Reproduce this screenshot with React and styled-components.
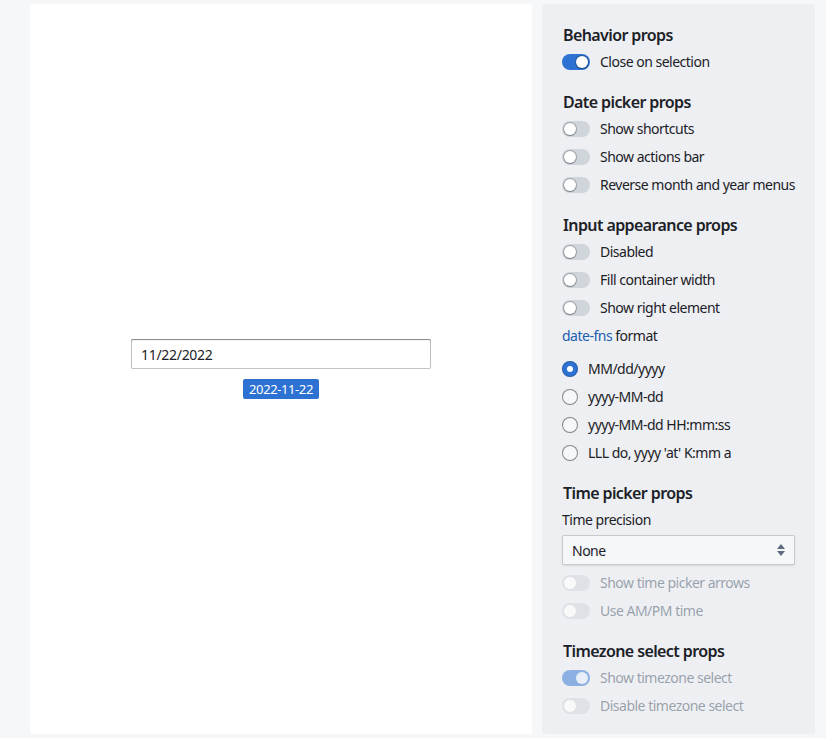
import React from "react";
import styled, { createGlobalStyle, css } from "styled-components";

const GlobalStyle = createGlobalStyle`
  html, body {
    margin: 0;
    padding: 0;
    background: #f6f7f9;
  }
  body {
    font-family: "Noto Sans", "Open Sans", sans-serif;
    font-size: 14px;
    letter-spacing: -0.5px;
    color: #1c2127;
  }
  * {
    box-sizing: border-box;
  }
`;

const Page = styled.div`
  display: flex;
  gap: 10px;
  height: 738px;
  padding: 4px 11px 4px 30px;
`;

const Example = styled.div`
  flex: 1;
  background: #fff;
  border-radius: 3px;
  display: flex;
  flex-direction: column;
  align-items: center;
  justify-content: center;
  gap: 10px;
`;

const DateInput = styled.input`
  width: 300px;
  height: 30px;
  padding: 0 10px;
  border: none;
  border-radius: 2px;
  font: inherit;
  letter-spacing: -0.3px;
  color: #1c2127;
  background: #fff;
  box-shadow: inset 0 0 0 1px rgba(17, 20, 24, 0.25),
    inset 0 1px 1px rgba(17, 20, 24, 0.35);
  outline: none;
`;

const Tag = styled.span`
  display: inline-flex;
  align-items: center;
  height: 20px;
  padding: 0 6px;
  border-radius: 2px;
  background: #2d72d2;
  color: #fff;
  font-size: 13px;
  letter-spacing: -0.4px;
`;

const Options = styled.div`
  width: 273px;
  background: #edeff2;
  border-radius: 3px;
  padding: 20px 20px 9px;
  display: flex;
  flex-direction: column;
`;

const Heading = styled.h5`
  margin: 0 0 7px 1px;
  font-size: 16px;
  font-weight: 600;
  line-height: 22px;
  letter-spacing: -0.6px;
`;

const Section = styled.div`
  display: flex;
  flex-direction: column;
  & + & {
    margin-top: 10px;
  }
`;

const Row = styled.label`
  display: flex;
  align-items: center;
  gap: 10px;
  height: 18px;
  margin-bottom: 10px;
  line-height: 18px;
  white-space: nowrap;
  color: ${(p) => (p.$disabled ? "rgba(95, 107, 124, 0.6)" : "#1c2127")};
`;

const Track = styled.span`
  position: relative;
  flex: none;
  width: 28px;
  height: 16px;
  border-radius: 8px;
  background: ${(p) =>
    p.$on
      ? p.$disabled
        ? "rgba(45, 114, 210, 0.5)"
        : "#2d72d2"
      : p.$disabled
      ? "rgba(143, 153, 168, 0.15)"
      : "rgba(143, 153, 168, 0.3)"};
`;

const Knob = styled.span`
  position: absolute;
  top: 2px;
  left: ${(p) => (p.$on ? "14px" : "2px")};
  width: 12px;
  height: 12px;
  border-radius: 50%;
  background: ${(p) => (p.$disabled ? "rgba(255,255,255,0.8)" : "#fff")};
  box-shadow: ${(p) =>
    p.$disabled
      ? "none"
      : "0 0 0 1px rgba(17,20,24,0.25), 0 1px 1px rgba(17,20,24,0.25)"};
`;

const RadioDot = styled.span`
  flex: none;
  width: 16px;
  height: 16px;
  border-radius: 50%;
  display: flex;
  align-items: center;
  justify-content: center;
  ${(p) =>
    p.$on
      ? css`
          background: #2d72d2;
          box-shadow: inset 0 0 0 1px rgba(17, 20, 24, 0.2);
          &::after {
            content: "";
            width: 6px;
            height: 6px;
            border-radius: 50%;
            background: #fff;
          }
        `
      : css`
          background: #f6f7f9;
          box-shadow: inset 0 0 0 1px rgba(17, 20, 24, 0.5);
        `}
`;

const FieldLabel = styled.div`
  line-height: 18px;
  margin-bottom: ${(p) => p.$mb || 0}px;
`;

const Link = styled.a`
  color: #215db0;
  text-decoration: none;
`;

const Select = styled.div`
  position: relative;
  height: 30px;
  padding: 0 10px;
  display: flex;
  align-items: center;
  justify-content: space-between;
  background: #f6f7f9;
  border-radius: 2px;
  box-shadow: inset 0 0 0 1px rgba(17, 20, 24, 0.2),
    0 1px 2px rgba(17, 20, 24, 0.1);
  margin-bottom: 9px;
`;

function Switch({ label, on, disabled }) {
  return (
    <Row $disabled={disabled}>
      <Track $on={on} $disabled={disabled}>
        <Knob $on={on} $disabled={disabled} />
      </Track>
      {label}
    </Row>
  );
}

function Radio({ label, on }) {
  return (
    <Row>
      <RadioDot $on={on} />
      {label}
    </Row>
  );
}

export default function App() {
  return (
    <>
      <GlobalStyle />
      <Page>
        <Example>
          <DateInput defaultValue="11/22/2022" />
          <Tag>2022-11-22</Tag>
        </Example>
        <Options>
          <Section>
            <Heading>Behavior props</Heading>
            <Switch label="Close on selection" on />
          </Section>
          <Section>
            <Heading>Date picker props</Heading>
            <Switch label="Show shortcuts" />
            <Switch label="Show actions bar" />
            <Switch label="Reverse month and year menus" />
          </Section>
          <Section>
            <Heading>Input appearance props</Heading>
            <Switch label="Disabled" />
            <Switch label="Fill container width" />
            <Switch label="Show right element" />
            <FieldLabel $mb={15}>
              <Link href="#">date-fns</Link> format
            </FieldLabel>
            <Radio label="MM/dd/yyyy" on />
            <Radio label="yyyy-MM-dd" />
            <Radio label="yyyy-MM-dd HH:mm:ss" />
            <Radio label="LLL do, yyyy 'at' K:mm a" />
          </Section>
          <Section>
            <Heading>Time picker props</Heading>
            <FieldLabel $mb={6}>Time precision</FieldLabel>
            <Select>
              None
              <svg width="8" height="14" viewBox="0 0 8 14">
                <path d="M4 1 L8 6 H0 Z M4 13 L8 8 H0 Z" fill="#5f6b7c" />
              </svg>
            </Select>
            <Switch label="Show time picker arrows" disabled />
            <Switch label="Use AM/PM time" disabled />
          </Section>
          <Section>
            <Heading>Timezone select props</Heading>
            <Switch label="Show timezone select" on disabled />
            <Switch label="Disable timezone select" disabled />
          </Section>
        </Options>
      </Page>
    </>
  );
}
